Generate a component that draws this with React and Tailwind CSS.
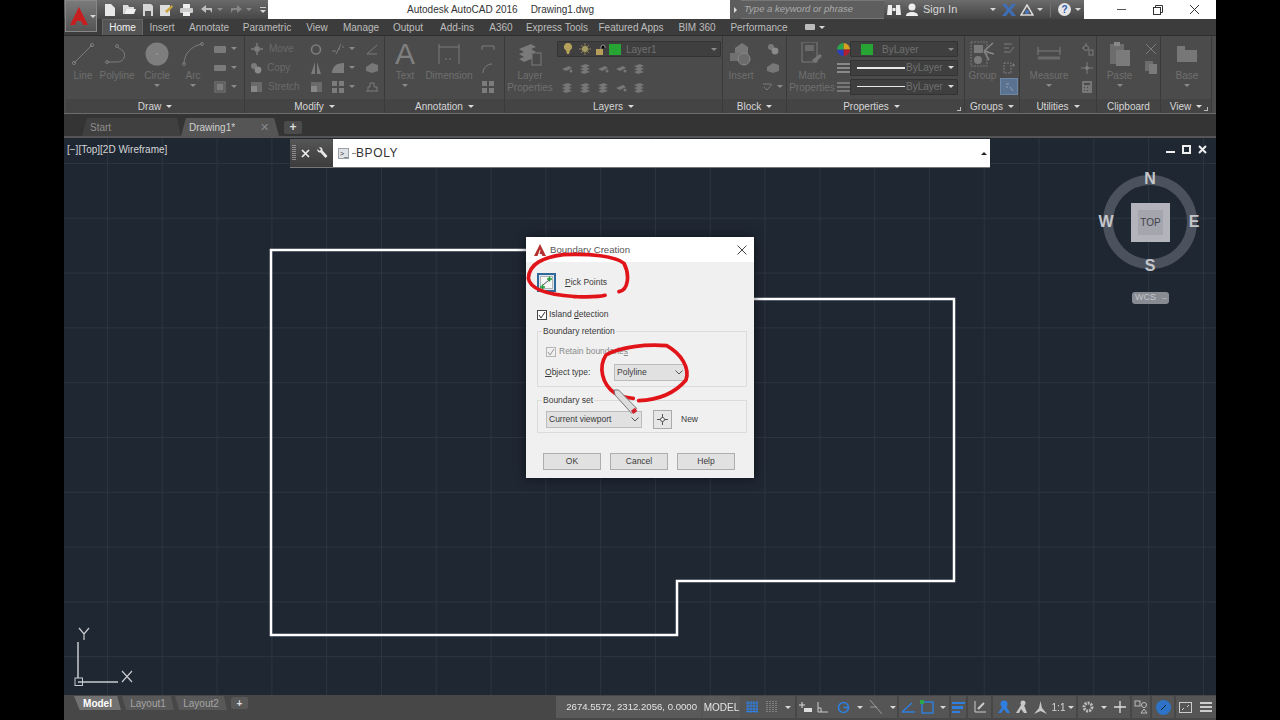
import React from 'react';

// tiny svg wrapper, everything in the ribbon is drawn on a small box
const Ic = ({ w = 14, h = 14, className = 'text-[#7c7c7c]', children }) => (
  <svg width={w} height={h} viewBox={`0 0 ${w} ${h}`} fill="none" stroke="currentColor" strokeWidth="1" className={`flex-shrink-0 ${className}`}>
    {children}
  </svg>
);

const Caret = ({ up = false, color = 'light' }) => (
  <span className={`inline-block w-0 h-0 border-x-[3px] border-x-transparent flex-shrink-0
    ${up ? 'border-b-[3px]' : 'border-t-[3px]'}
    ${color === 'light' && !up ? 'border-t-[#d8d8d8]' : ''}
    ${color === 'dim' ? 'border-t-[#8a8a8a]' : ''}
    ${up ? 'border-b-[#222]' : ''}`} />
);

const tabs = [
  ['Home', 'w-[41px]'], ['Insert', 'w-[38px]'], ['Annotate', 'w-[56px]'], ['Parametric', 'w-[60px]'],
  ['View', 'w-[40px]'], ['Manage', 'w-[48px]'], ['Output', 'w-[46px]'], ['Add-ins', 'w-[52px]'],
  ['A360', 'w-[36px]'], ['Express Tools', 'w-[76px]'], ['Featured Apps', 'w-[72px]'], ['BIM 360', 'w-[60px]'],
  ['Performance', 'w-[64px]'],
];

const Big = ({ w, label, label2, caret, children }) => (
  <div className={`${w} flex flex-col items-center pt-[6px] flex-shrink-0`}>
    <div className="h-[24px] flex items-center justify-center">{children}</div>
    <span className="mt-[4px] text-[10px] leading-[12px] text-[#6f6f6f] whitespace-nowrap">{label}</span>
    {label2 && <span className="text-[10px] leading-[12px] text-[#6f6f6f] whitespace-nowrap">{label2}</span>}
    {caret && <span className="mt-[2px] flex"><Caret color="dim" /></span>}
  </div>
);

const SmallCol = ({ w, children }) => (
  <div className={`${w} flex flex-col pt-[3px] flex-shrink-0`}>{children}</div>
);

const SmallRow = ({ caret, children }) => (
  <div className="h-[19px] flex items-center justify-center gap-[4px]">
    {children}
    {caret && <Caret color="dim" />}
  </div>
);

const Panel = ({ w, title, caret = true, corner, titleClass = '', children }) => (
  <div className={`${w} flex-shrink-0 flex flex-col border-r border-r-[#3a3a3a]`}>
    <div className="h-[63px] flex overflow-hidden">{children}</div>
    <div className={`h-[14px] bg-[#444] flex items-center justify-center gap-[5px] relative text-[10px] text-[#d6d6d6] ${titleClass}`}>
      <span>{title}</span>
      {caret && <Caret />}
      {corner && <span className="absolute right-[3px] bottom-[2px] w-[4px] h-[4px] border-r border-b border-[#bbb]" />}
    </div>
  </div>
);

// ---- small ribbon glyphs
const LineIc = () => <Ic w={24} h={24}><path d="M3 21 21 3" /><circle cx="3" cy="21" r="1.6" /><circle cx="21" cy="3" r="1.6" /></Ic>;
const PolyIc = () => <Ic w={26} h={24}><path d="M3 20h10c8 0 9-8 6-11-2-2-4-3-6-4" /><circle cx="3" cy="20" r="1.5" /><circle cx="13" cy="4" r="1.5" /></Ic>;
const CircleIc = () => <svg width="24" height="24" viewBox="0 0 24 24"><circle cx="12" cy="12" r="11.5" fill="#7e7e7e" /><circle cx="12" cy="12" r="1" fill="#999" /></svg>;
const ArcIc = () => <Ic w={24} h={24}><path d="M3 22C3 12 10 4 21 2" /><circle cx="3" cy="22" r="1.5" /><circle cx="21" cy="2" r="1.5" /></Ic>;
const Blob = ({ w = 12, h = 10 }) => <svg width={w} height={h} viewBox={`0 0 ${w} ${h}`}><rect x="1" y="2" width={w - 2} height={h - 3} rx="1" fill="#7a7a7a" /></svg>;
const Dots = () => <svg width="12" height="12" viewBox="0 0 12 12"><circle cx="4" cy="4" r="3" fill="#7a7a7a" /><circle cx="8" cy="8" r="3.4" fill="#8a8a8a" /></svg>;
const MoveIc = () => <Ic w={14} h={14}><path d="M7 1v12M1 7h12" strokeWidth="1.4" /><rect x="5" y="5" width="4" height="4" fill="#7c7c7c" /></Ic>;
const RotIc = () => <Ic w={12} h={12}><circle cx="6" cy="6.5" r="4.5" strokeWidth="1.6" /></Ic>;
const TrimIc = () => <Ic w={14} h={12}><path d="M1 8h4M7 6h2M11 4h2" /><path d="M10 1 5 11" /></Ic>;
const EdgeIc = () => <Ic w={14} h={14}><path d="M2 12 12 3M2 12h10" /></Ic>;
const MirIc = () => <svg width="12" height="14" viewBox="0 0 12 14"><path d="M5 1v12H1zM7 1v12h4z" fill="#7c7c7c" /></svg>;
const FilIc = () => <svg width="14" height="12" viewBox="0 0 14 12"><path d="M1 11C1 5 5 1 13 1v10z" fill="#7c7c7c" /></svg>;
const CubeIc = () => <svg width="14" height="12" viewBox="0 0 14 12"><path d="M1 5l6-4 6 2v6l-6 2-6-2z" fill="#777" /></svg>;
const ScaleIc = () => <svg width="13" height="12" viewBox="0 0 13 12"><rect x="1" y="1" width="11" height="10" fill="#6a6a6a" /><rect x="1" y="5" width="6" height="6" fill="#888" /></svg>;
const GridIc = () => <svg width="13" height="12" viewBox="0 0 13 12"><path d="M0 0h5v5H0zM7 0h5v5H7zM0 7h5v5H0zM7 7h5v5H7z" fill="#7c7c7c" /></svg>;
const WaveIc = () => <Ic w={14} h={12}><path d="M1 10h12M3 10V6h2V2h4v4h3v4" /></Ic>;
const ARowIc = () => <Ic w={14} h={12}><path d="M1 3h12M1 3v4M13 3v4" /></Ic>;
const LyrSm = () => <svg width="13" height="12" viewBox="0 0 13 12"><path d="M1 3l6-2 4 2-6 2zM1 6l6-2 4 2-6 2zM1 9l6-2 4 2-6 2z" fill="#777" /></svg>;
const LyrFlat = () => <svg width="13" height="10" viewBox="0 0 13 10"><path d="M1 5l7-3 3 2-6 3z" fill="#777" /><circle cx="10" cy="7" r="1.5" fill="#777" /></svg>;

const Combo = ({ w, children }) => (
  <div className={`${w} h-[16px] bg-[#3f3f3f] border border-[#333] rounded-[1px] flex items-center text-[10px] text-[#6f6f6f] flex-shrink-0`}>
    {children}
  </div>
);

const Ribbon = () => (
  <div className="h-[78px] bg-[#4b4b4b] flex pl-[2px] border-b border-b-[#6c6c6c]">
    <Panel w="w-[179px]" title="Draw">
      <Big w="w-[34px]" label="Line"><LineIc /></Big>
      <Big w="w-[34px]" label="Polyline"><PolyIc /></Big>
      <Big w="w-[46px]" label="Circle" caret><CircleIc /></Big>
      <Big w="w-[26px]" label="Arc" caret><ArcIc /></Big>
      <SmallCol w="w-[38px]">
        <SmallRow caret><Blob w={14} h={10} /></SmallRow>
        <SmallRow caret><Blob w={14} h={9} /></SmallRow>
        <SmallRow caret><Ic w={14} h={14}><rect x="2" y="2" width="10" height="10" /><rect x="4" y="4" width="6" height="6" fill="#7c7c7c" /></Ic></SmallRow>
      </SmallCol>
    </Panel>
    <Panel w="w-[140px]" title="Modify">
      <SmallCol w="w-[60px]">
        {[['Move', <MoveIc key="m" />], ['Copy', <Dots key="c" />], ['Stretch', <ScaleIc key="s" />]].map(([t, ic]) => (
          <div key={t} className="h-[19px] flex items-center gap-[5px] pl-[5px] text-[10px] text-[#6a6a6a]">{ic}<span>{t}</span></div>
        ))}
      </SmallCol>
      <SmallCol w="w-[22px]">
        <SmallRow><RotIc /></SmallRow>
        <SmallRow><MirIc /></SmallRow>
        <SmallRow><ScaleIc /></SmallRow>
      </SmallCol>
      <SmallCol w="w-[32px]">
        <SmallRow caret><TrimIc /></SmallRow>
        <SmallRow caret><FilIc /></SmallRow>
        <SmallRow caret><GridIc /></SmallRow>
      </SmallCol>
      <SmallCol w="w-[26px]">
        <SmallRow><EdgeIc /></SmallRow>
        <SmallRow><CubeIc /></SmallRow>
        <SmallRow><WaveIc /></SmallRow>
      </SmallCol>
    </Panel>
    <Panel w="w-[120px]" title="Annotation">
      <Big w="w-[40px]" label="Text" caret><span className="text-[30px] leading-[24px] text-[#7f7f7f]">A</span></Big>
      <Big w="w-[48px]" label="Dimension">
        <Ic w={24} h={24}><path d="M2 2v20M22 2v20M2 5h20" /><path d="M8 17h8" strokeDasharray="2 2" /></Ic>
      </Big>
      <SmallCol w="w-[30px]">
        <SmallRow><ARowIc /></SmallRow>
        <SmallRow><Ic w={14} h={12}><path d="M2 11C2 6 6 2 11 2" /></Ic></SmallRow>
        <SmallRow><GridIc /></SmallRow>
      </SmallCol>
    </Panel>
    <Panel w="w-[218px]" title="Layers">
      <Big w="w-[50px]" label="Layer" label2="Properties">
        <svg width="26" height="24" viewBox="0 0 26 24"><path d="M2 7l12-5 5 3-12 5zM2 12l12-5 5 3-12 5zM2 17l12-5 5 3-12 5z" fill="#7a7a7a" /><rect x="15" y="11" width="9" height="12" fill="#4a4a4a" stroke="#7a7a7a" /></svg>
      </Big>
      <div className="flex flex-col pt-[5px] ml-[2px]">
        <Combo w="w-[164px]">
          <svg width="10" height="12" viewBox="0 0 10 12" className="ml-[5px]"><path d="M5 0a4 4 0 0 1 2 7.5L6 11H4L3 7.5A4 4 0 0 1 5 0z" fill="#b5a25a" /></svg>
          <svg width="12" height="12" viewBox="0 0 12 12" className="ml-[6px]"><circle cx="6" cy="6" r="3" fill="#a39a5e" /><path d="M6 0v12M0 6h12M2 2l8 8M10 2l-8 8" stroke="#a39a5e" strokeWidth=".7" /></svg>
          <svg width="11" height="11" viewBox="0 0 11 11" className="ml-[5px]"><rect x="0" y="5" width="7" height="6" fill="#b79c5c" /><path d="M5 5V3a2 2 0 0 1 4 0v1" stroke="#999" /></svg>
          <span className="ml-[2px] w-[12px] h-[11px] bg-[#27a534] flex-shrink-0" />
          <span className="ml-[5px]">Layer1</span>
          <span className="ml-auto mr-[3px] flex"><Caret color="dim" /></span>
        </Combo>
        <div className="mt-[2px] flex flex-col">
          {[0, 1].map(r => (
            <div key={r} className="h-[19px] flex items-center gap-[5px] pl-[4px]">
              {r === 0
                ? [<LyrFlat key="a" />, <LyrSm key="b" />, <LyrFlat key="c" />, <LyrFlat key="d" />, <LyrSm key="e" />]
                : [<LyrSm key="a" />, <LyrSm key="b" />, <LyrSm key="c" />, <LyrFlat key="d" />, <LyrSm key="e" />]}
            </div>
          ))}
        </div>
      </div>
    </Panel>
    <Panel w="w-[64px]" title="Block">
      <Big w="w-[36px]" label="Insert">
        <svg width="24" height="24" viewBox="0 0 24 24"><path d="M6 6l7-5 6 4v8H6z" fill="#777" /><rect x="1" y="11" width="14" height="8" fill="#707070" /><circle cx="15" cy="17" r="6" fill="#6c6c6c" stroke="#888" /></svg>
      </Big>
      <SmallCol w="w-[27px]">
        <SmallRow><Dots /></SmallRow>
        <SmallRow><CubeIc /></SmallRow>
        <SmallRow caret><Ic w={11} h={11}><path d="M1 3h8M2 6l3 3 5-6" /></Ic></SmallRow>
      </SmallCol>
    </Panel>
    <Panel w="w-[178px]" title="Properties" corner titleClass="pr-[8px]">
      <Big w="w-[50px]" label="Match" label2="Properties">
        <svg width="24" height="24" viewBox="0 0 24 24"><rect x="2" y="0" width="15" height="20" fill="none" stroke="#7a7a7a" /><rect x="5" y="3" width="9" height="6" fill="#6a6a6a" /><path d="M12 18l8-6 2 2-7 7z" fill="#777" /></svg>
      </Big>
      <div className="flex flex-col pt-[4px]">
        <div className="flex items-center h-[18px]">
          <svg width="13" height="13" viewBox="0 0 13 13"><path d="M6.500 0A6.500 6.500 0 0 1 13 6.500H6.500z" fill="#d8a21f" /><path d="M13 6.500A6.500 6.500 0 0 1 6.500 13V6.500z" fill="#b01f2f" /><path d="M6.500 13A6.500 6.500 0 0 1 0 6.500h6.500z" fill="#2a3fc0" /><path d="M0 6.500A6.500 6.500 0 0 1 6.500 0v6.500z" fill="#2ca548" /></svg>
          <Combo w="w-[108px]">
            <span className="ml-[10px] w-[12px] h-[11px] bg-[#27a534] flex-shrink-0" />
            <span className="ml-[9px]">ByLayer</span>
            <span className="ml-auto mr-[3px] flex"><Caret color="dim" /></span>
          </Combo>
        </div>
        {['h-[2px]', 'h-px'].map((lh, i) => (
          <div key={lh} className="flex items-center h-[19px]">
            <span className={`w-[13px] flex flex-col ${i === 0 ? 'gap-[2px]' : 'gap-[2px] opacity-70'}`}>
              <span className="h-[2px] bg-[#8a8a8a]" /><span className="h-[2px] bg-[#8a8a8a]" /><span className="h-[2px] bg-[#8a8a8a]" />
            </span>
            <Combo w="w-[108px]">
              <span className={`ml-[6px] w-[48px] ${lh} bg-[#e8e8e8] flex-shrink-0`} />
              <span className="ml-[1px]">ByLayer</span>
              <span className="ml-auto mr-[3px] flex"><Caret /></span>
            </Combo>
          </div>
        ))}
      </div>
    </Panel>
    <Panel w="w-[55px]" title="Groups">
      <Big w="w-[35px]" label="Group">
        <svg width="26" height="26" viewBox="0 0 26 26"><rect x="1" y="1" width="16" height="24" fill="none" stroke="#777" strokeDasharray="2 1" /><rect x="4" y="4" width="9" height="8" fill="#7a7a7a" /><circle cx="8" cy="19" r="4" fill="#7a7a7a" /><path d="M14 10l9-8M14 10l10 3M14 10l5 9" stroke="#888" strokeWidth="1.5" /></svg>
      </Big>
      <SmallCol w="w-[18px]">
        <SmallRow><Ic w={12} h={13}><path d="M1 2h8M1 6h5M1 10h5M6 11l5-6" /></Ic></SmallRow>
        <SmallRow><Ic w={12} h={12}><rect x="1" y="1" width="7" height="10" strokeDasharray="2 1" /><path d="M9 3h3M10.500 1.500v3" /></Ic></SmallRow>
        <SmallRow><span className="w-[18px] h-[17px] bg-[#5b7390] border border-[#6d88a6] flex items-center justify-center"><Ic w={10} h={10} className="text-[#8fa0b4]"><path d="M2 2h3M2 5h2M6 5l3 4" /></Ic></span></SmallRow>
      </SmallCol>
    </Panel>
    <Panel w="w-[77px]" title="Utilities">
      <Big w="w-[58px]" label="Measure" caret>
        <Ic w={26} h={20}><path d="M2 3v8M24 3v8M2 7h22" /><path d="M2 14h22" strokeWidth="3" className="text-[#6a6a6a]" /></Ic>
      </Big>
      <SmallCol w="w-[18px]">
        <SmallRow><Ic w={13} h={14}><circle cx="5" cy="6" r="2.500" /><rect x="8" y="8" width="4" height="5" /><path d="M5 1v3M1 6h2" /></Ic></SmallRow>
        <SmallRow><Ic w={14} h={14}><path d="M7 1v12M1 7h12" /><circle cx="7" cy="7" r="1.500" fill="#7c7c7c" /></Ic></SmallRow>
        <SmallRow><svg width="10" height="12" viewBox="0 0 10 12"><rect width="10" height="12" rx="1" fill="#777" /><rect x="2" y="2" width="6" height="2" fill="#4a4a4a" /><path d="M2 6h1v1H2zM5 6h1v1H5zM2 9h1v1H2zM5 9h1v1H5z" fill="#4a4a4a" /></svg></SmallRow>
      </SmallCol>
    </Panel>
    <Panel w="w-[64px]" title="Clipboard" caret={false}>
      <Big w="w-[45px]" label="Paste" caret>
        <svg width="20" height="24" viewBox="0 0 20 24"><rect x="0" y="2" width="14" height="20" fill="#6d6d6d" /><rect x="4" y="0" width="6" height="4" fill="#888" /><rect x="6" y="8" width="14" height="16" fill="#7b7b7b" /></svg>
      </Big>
      <SmallCol w="w-[18px]">
        <SmallRow><Ic w={12} h={12}><path d="M1 1l10 10M11 1 1 11" /></Ic></SmallRow>
        <SmallRow><svg width="12" height="13" viewBox="0 0 12 13"><rect x="0" y="0" width="8" height="10" fill="#6d6d6d" /><rect x="4" y="3" width="8" height="10" fill="#7b7b7b" /></svg></SmallRow>
      </SmallCol>
    </Panel>
    <Panel w="w-[51px]" title="View" corner>
      <div className="pl-[2px]">
        <Big w="w-[48px]" label="Base" caret>
          <svg width="20" height="16" viewBox="0 0 20 16"><path d="M0 0h8v4h12v12H0z" fill="#777" /></svg>
        </Big>
      </div>
    </Panel>
  </div>
);

const TitleBar = () => (
  <div className="h-[19px] flex bg-white">
    <div className="w-[204px] pl-[40px] flex items-center gap-[7px] bg-gradient-to-b from-[#6a6a6a] to-[#474747]">
      <svg width="12" height="12" viewBox="0 0 12 12"><path d="M1 0h6l4 4v8H1z" fill="#e8e8e8" /></svg>
      <svg width="13" height="11" viewBox="0 0 13 11"><path d="M0 1h5l1 2h5v2H3L1 10H0z" fill="#ddd" /><path d="M3 5h10l-2 5H1z" fill="#f0f0f0" /></svg>
      <svg width="10" height="12" viewBox="0 0 10 12"><path d="M0 0h8l2 2v10H0z" fill="#d5d5d5" /><rect x="2" y="7" width="6" height="5" fill="#555" /></svg>
      <svg width="13" height="12" viewBox="0 0 13 12"><rect y="1" width="10" height="11" fill="#ddd" /><path d="M5 7l7-6 1 2-6 6z" fill="#c8a43a" /></svg>
      <svg width="13" height="12" viewBox="0 0 13 12"><rect x="3" y="0" width="7" height="4" fill="#eee" /><rect y="4" width="13" height="5" rx="1" fill="#ccc" /><rect x="3" y="8" width="7" height="4" fill="#eee" /></svg>
      <span className="flex items-center gap-[4px] ml-[1px]">
        <svg width="12" height="10" viewBox="0 0 12 10"><path d="M5 0 0 4l5 4V5h4l2 3V3H5z" fill="#bdbdbd" /></svg>
        <Caret color="dim" />
      </span>
      <span className="flex items-center gap-[4px]">
        <svg width="12" height="10" viewBox="0 0 12 10"><path d="M7 0l5 4-5 4V5H3L1 8V3h6z" fill="#858585" /></svg>
        <Caret color="dim" />
      </span>
      <span className="w-[7px] flex flex-col gap-[2px] items-center">
        <span className="w-[6px] h-px bg-[#ccc]" /><Caret />
      </span>
    </div>
    <div className="w-[462px] pl-[139px] flex items-center text-[10px] text-[#333] whitespace-nowrap">
      <span>Autodesk AutoCAD 2016</span><span className="ml-[13px]">Drawing1.dwg</span>
    </div>
    <div className="w-[11px] bg-[#5d5d5d] flex items-center justify-center">
      <span className="w-0 h-0 border-y-[3px] border-y-transparent border-l-[3px] border-l-[#ddd]" />
    </div>
    <div className="w-[143px] bg-[#5e5e5e] flex items-center pl-[3px] text-[9.5px] italic text-[#aaa] border-y border-[#777]">Type a keyword or phrase</div>
    <div className="w-[200px] flex-shrink-0 bg-gradient-to-b from-[#6c6c6c] to-[#444] flex items-center pl-[3px] text-[10px] text-[#d8d8d8] whitespace-nowrap">
      <svg width="14" height="12" viewBox="0 0 14 12" className="flex-shrink-0"><path d="M1 1h4v10H0zM9 1h4l1 10H9zM5.500 4h3v3h-3z" fill="#eee" /></svg>
      <svg width="14" height="14" viewBox="0 0 14 14" className="ml-[4px] flex-shrink-0"><circle cx="7" cy="4" r="3.500" fill="#eee" /><path d="M1 13c0-3 3-4 6-4s6 1 6 4z" fill="#eee" /></svg>
      <span className="ml-[4px] w-[33px] text-[11px]">Sign In</span>
      <span className="ml-[34px] flex"><Caret /></span>
      <svg width="14" height="12" viewBox="0 0 14 12" className="ml-[6px] flex-shrink-0"><path d="M0 0h4l3 4 3-4h4L9 6l5 6h-4L7 8l-3 4H0l5-6z" fill="#3f6fb8" /></svg>
      <svg width="14" height="12" viewBox="0 0 14 12" className="ml-[4px] flex-shrink-0"><path d="M7 1l6 10H1z" fill="none" stroke="#d8d8d8" strokeWidth="1.500" /><circle cx="7" cy="8" r="2" fill="#4878c0" /></svg>
      <span className="ml-[3px] flex"><Caret /></span>
      <span className="ml-[7px] w-px h-[14px] bg-[#6f6f6f]" />
      <span className="ml-[7px] w-[13px] h-[13px] flex-shrink-0 rounded-full bg-[#e6e6e6] flex items-center justify-center text-[10px] font-bold text-[#2b5aa6]">?</span>
      <span className="ml-[4px] flex"><Caret /></span>
    </div>
    <div className="flex-1 flex items-center text-[#444]">
      <span className="ml-[33px] w-[9px] h-px bg-[#555]" />
      <svg width="10" height="10" viewBox="0 0 10 10" className="ml-[27px]" fill="none" stroke="#333"><rect x=".500" y="2.500" width="7" height="7" /><path d="M2.500 2.500v-2h7v7h-2" /></svg>
      <svg width="11" height="11" viewBox="0 0 11 11" className="ml-[26px]" stroke="#333"><path d="M1 1l9 9M10 1l-9 9" /></svg>
    </div>
  </div>
);

const TabStrip = () => (
  <div className="h-[17px] bg-[#3c3c3c] flex pl-[38px] text-[10px] text-[#bdbdbd] border-b border-b-[#2e2e2e]">
    {tabs.map(([t, w], i) => (
      <div key={t} className={`${w} flex items-center justify-center ${i === 0 ? 'bg-[#555] text-[#f0f0f0] border-x border-t border-[#666]' : ''}`}>{t}</div>
    ))}
    <div className="ml-[14px] flex items-center gap-[4px]">
      <span className="w-[10px] h-[6px] bg-[#bbb] rounded-[1px]" /><Caret />
    </div>
  </div>
);

const FileTabs = () => (
  <div className="h-[24px] bg-[#343434] flex pl-[18px] items-end border-b-[2px] border-b-[#555] text-[10px]">
    <div className="w-[99px] h-[18px] bg-[#404040] text-[#8e8e8e] flex items-center pl-[8px] [clip-path:polygon(5%_0,96%_0,100%_100%,0_100%)]">Start</div>
    <div className="w-[98px] h-[18px] bg-[#555] text-[#d0d0d0] flex items-center pl-[8px] justify-between pr-[10px] [clip-path:polygon(5%_0,95%_0,100%_100%,0_100%)]">
      <span>Drawing1*</span><span className="text-[#888] text-[11px]">✕</span>
    </div>
    <div className="ml-[5px] mb-[2px] w-[18px] h-[13px] bg-[#4b4b4b] rounded-[2px] text-[#ddd] text-[12px] leading-[13px] text-center font-bold">+</div>
  </div>
);

const Dialog = () => (
  <div className="absolute left-[462px] top-[99px] w-[228px] h-[241px] bg-[#f0f0f0] shadow-[0_0_10px_rgba(0,0,0,0.55)] text-[8.5px] leading-[13px] text-[#3a3a3a]">
    <div className="h-[25px] bg-white flex items-center pl-[8px] pr-[7px] text-[9.6px] text-[#555]">
      <svg width="12" height="12" viewBox="0 0 12 12"><path d="M6 0 12 12H8.500L7.500 10H5.500L6.500 6.500 6 5.500 3.500 12H0z" fill="#b52f2f" /></svg>
      <span className="ml-[4px]">Boundary Creation</span>
      <svg width="10" height="10" viewBox="0 0 10 10" className="ml-auto" stroke="#444"><path d="M.5.5l9 9M9.500.5l-9 9" /></svg>
    </div>
    <div className="pl-[11px] pr-[7px]">
      <div className="mt-[11px] flex items-center">
        <svg width="19" height="19" viewBox="0 0 19 19"><rect x="1" y="1" width="17" height="17" fill="#dfe7ee" stroke="#2f6a9a" strokeWidth="2" /><rect x="3.500" y="3.500" width="12" height="12" fill="#f7f7f7" stroke="#777" strokeDasharray="1 1" /><path d="M6 12 12 7" stroke="#555" /><path d="M10 6h5M12.500 3.500v5M3 14h5M5.500 11.500v5" stroke="#1f9a3a" strokeWidth="1.500" /></svg>
        <span className="ml-[9px]"><u>P</u>ick Points</span>
      </div>
      <div className="mt-[16px] flex items-center gap-[2px]">
        <span className="w-[10px] h-[10px] bg-white border border-[#444] flex items-center justify-center">
          <svg width="8" height="8" viewBox="0 0 8 8" fill="none" stroke="#333"><path d="M1 4l2 3 4-6" /></svg>
        </span>
        <span>Island <u>d</u>etection</span>
      </div>
      <div className="relative mt-[10px] h-[56px] w-[210px] border border-[#dcdcdc] px-[7px] pt-[13px]">
        <span className="absolute left-[4px] -top-[6px] bg-[#f0f0f0] px-px leading-[11px]">Boundary retention</span>
        <div className="flex items-center gap-[3px] text-[#8a8a8a] ml-[1px]">
          <span className="w-[10px] h-[10px] border border-[#b5b5b5] flex items-center justify-center">
            <svg width="8" height="8" viewBox="0 0 8 8" fill="none" stroke="#999"><path d="M1 4l2 3 4-6" /></svg>
          </span>
          <span>Retain boundarie<u>s</u></span>
        </div>
        <div className="mt-[6px] flex items-center">
          <span className="w-[69px]"><u>O</u>bject type:</span>
          <div className="w-[72px] h-[17px] bg-[#e1e1e1] border border-[#bcbcbc] flex items-center pl-[2px]">
            <span>Polyline</span>
            <svg width="8" height="5" viewBox="0 0 8 5" fill="none" stroke="#555" className="ml-auto mr-[2px]"><path d="M.5.5 4 4 7.500.5" /></svg>
          </div>
        </div>
      </div>
      <div className="relative mt-[13px] h-[33px] w-[210px] border border-[#dcdcdc] pl-[8px] pt-[5px] flex items-center">
        <span className="absolute left-[4px] -top-[6px] bg-[#f0f0f0] px-px leading-[11px]">Boundary set</span>
        <div className="w-[96px] h-[17px] bg-[#e1e1e1] border border-[#bcbcbc] flex items-center pl-[2px]">
          <span>Current viewport</span>
          <svg width="8" height="5" viewBox="0 0 8 5" fill="none" stroke="#555" className="ml-auto mr-[2px]"><path d="M.5.5 4 4 7.500.5" /></svg>
        </div>
        <div className="ml-[11px] w-[19px] h-[19px] bg-[#e6e6e6] border border-[#aaa] flex items-center justify-center">
          <svg width="11" height="11" viewBox="0 0 11 11" fill="none" stroke="#555"><path d="M5.500 0v11M0 5.500h11" /><circle cx="5.500" cy="5.500" r="2" fill="#eee" /></svg>
        </div>
        <span className="ml-[9px]">New</span>
      </div>
      <div className="mt-[20px] ml-[6px] flex gap-[9px]">
        {['OK', 'Cancel', 'Help'].map(b => (
          <div key={b} className="w-[58px] h-[17px] bg-[#e1e1e1] border border-[#adadad] flex items-center justify-center">{b}</div>
        ))}
      </div>
    </div>
    {/* red marker scribbles + pen, coordinates taken off a 3x crop */}
    <svg width="240" height="255" viewBox="0 0 720 765" className="absolute -left-[6px] -top-[7px] pointer-events-none" fill="none">
      <path d="M297 185C325 180 330 135 312 100 285 78 210 70 130 74 70 82 28 100 25 145 30 178 80 195 170 200 200 201 240 200 255 196" stroke="#e1141a" strokeWidth="11" strokeLinecap="round" />
      <path d="M356 512C410 510 460 495 498 450 510 415 485 372 440 347 380 342 300 350 258 375 235 410 245 462 285 490 305 503 325 503 340 505" stroke="#e1141a" strokeWidth="11" strokeLinecap="round" />
      <path d="M282 480 296 480 350 535 335 550 285 495Z" fill="#dcdcdc" stroke="#777" strokeWidth="3" />
      <path d="M333 542 345 533 352 543 340 552Z" fill="#d2202a" />
    </svg>
  </div>
);

const ViewCube = () => (
  <div className="absolute left-[1017px] top-[26px] w-[138px] h-[144px] pointer-events-none">
    <svg width="138" height="144" viewBox="0 0 138 144" className="absolute inset-0">
      <circle cx="69" cy="58" r="42" fill="none" stroke="#4b525e" strokeWidth="10" />
    </svg>
    <span className="absolute left-[59px] top-[7px] w-[20px] text-center text-[16px] leading-[16px] font-bold text-[#c4c6ca]">N</span>
    <span className="absolute left-[59px] top-[94px] w-[20px] text-center text-[16px] leading-[16px] font-bold text-[#c4c6ca]">S</span>
    <span className="absolute left-[103px] top-[50px] w-[20px] text-center text-[16px] leading-[16px] font-bold text-[#c4c6ca]">E</span>
    <span className="absolute left-[15px] top-[50px] w-[20px] text-center text-[16px] leading-[16px] font-bold text-[#c4c6ca]">W</span>
    <div className="absolute left-[50px] top-[39px] w-[39px] h-[39px] bg-[#b3b4bb] flex items-center justify-center">
      <div className="w-[25px] h-[25px] bg-[#a5a6ad] flex items-center justify-center text-[10px] text-[#3f4149]">TOP</div>
    </div>
    <div className="absolute left-[51px] top-[128px] w-[37px] h-[12px] rounded-[3px] bg-[#888b92] flex items-center pl-[3px] text-[9px] text-[#c3c5ca]">
      WCS<span className="ml-auto mr-[2px] w-[5px] h-px bg-[#aaa]" />
    </div>
  </div>
);

const Viewport = () => (
  <div className="relative flex-1 overflow-hidden bg-[#1f2733] bg-[linear-gradient(to_right,#2c3440_1px,transparent_1px),linear-gradient(to_bottom,#2c3440_1px,transparent_1px)] bg-[size:54.8px_54.8px] bg-[position:43px_25px]">
    <span className="absolute left-[3px] top-[6px] text-[10px] leading-[12px] text-[#d5d5d5]">[−][Top][2D Wireframe]</span>

    <svg width="1152" height="557" viewBox="0 0 1152 557" className="absolute inset-0" fill="none">
      <path d="M207 112H586V161H890V443H613V497H207Z" stroke="#fff" strokeWidth="2.500" />
      {/* UCS icon */}
      <path d="M14 504V540M14 544H54" stroke="#c8ccd0" strokeWidth="1.500" />
      <rect x="11" y="540" width="7.500" height="7.500" stroke="#c8ccd0" />
      <path d="M58 533l10 11M68 533l-10 11M15 490l5 6 5-6M20 496v6" stroke="#c8ccd0" strokeWidth="1.200" />
    </svg>

    {/* command line */}
    <div className="absolute left-[226px] top-[1px] w-[700px] h-[28px] flex shadow-[0_1px_0_#777]">
      <div className="w-[43px] bg-gradient-to-b from-[#565656] to-[#3c3c3c] flex items-center pl-[2px]">
        <span className="w-[4px] h-[16px] opacity-70 bg-[repeating-linear-gradient(to_bottom,#aaa_0,#aaa_1px,transparent_1px,transparent_2px)]" />
        <svg width="9" height="9" viewBox="0 0 9 9" stroke="#eee" strokeWidth="1.700" className="ml-[5px]"><path d="M1 1l7 7M8 1 1 8" /></svg>
        <svg width="12" height="12" viewBox="0 0 12 12" className="ml-[6px]" fill="#e8e8e8"><path d="M1.500 2 3.500 4 5 2.500 3 .5C5-.3 6.800 1 6.500 3.500L11.500 9 9.500 11 4.500 5.500C2.500 6 .8 4.300 1.500 2Z" /></svg>
      </div>
      <div className="flex-1 bg-white flex items-center pl-[5px] pr-[3px]">
        <span className="w-[11px] h-[11px] bg-[#dfe3e8] border border-[#9aa0a8] flex items-center text-[7px] leading-none text-[#333] pl-px">&gt;_</span>
        <span className="ml-[3px] w-[4px] h-px bg-[#888]" />
        <span className="text-[12px] tracking-[0.6px] text-[#333]">BPOLY</span>
        <span className="ml-auto flex"><Caret up /></span>
      </div>
    </div>

    {/* viewport window buttons */}
    <div className="absolute left-[1102px] top-[7px] flex items-center gap-[7px]">
      <span className="w-[9px] h-[2px] mt-[4px] bg-[#eee]" />
      <span className="w-[9px] h-[9px] border-2 border-[#eee]" />
      <svg width="9" height="9" viewBox="0 0 9 9" stroke="#eee" strokeWidth="2"><path d="M1 1l7 7M8 1 1 8" /></svg>
    </div>

    <ViewCube />
    <Dialog />
  </div>
);

const B = '#2f7fe0';
const statusCells = [
  ['w-[20px]', <svg key="g" width="12" height="12" viewBox="0 0 12 12" stroke={B}><path d="M2 0v12M5 0v12M8 0v12M11 0v12M0 2h12M0 5h12M0 8h12M0 10.500h12" /></svg>],
  ['w-[19px]', <svg key="d" width="12" height="12" viewBox="0 0 12 12" stroke="#aaa" strokeDasharray="1 1"><path d="M1 0v12M4 0v12M7 0v12M10 0v12" /></svg>],
  ['w-[14px]', <Caret key="c1" />],
  ['sep'],
  ['w-[17px]', <svg key="p" width="13" height="11" viewBox="0 0 13 11"><path d="M3 0v6M0 3h6" stroke="#ddd" /><rect x="5" y="6" width="8" height="4" fill="#ddd" /></svg>],
  ['w-[16px]', <svg key="o" width="11" height="11" viewBox="0 0 11 11" fill="none" stroke="#ccc"><path d="M1 0v10h10" /><path d="M1 6h3v4" /></svg>],
  ['w-[27px]', <svg key="po" width="13" height="13" viewBox="0 0 13 13" fill="none" stroke={B} strokeWidth="1.600"><circle cx="6.500" cy="6.500" r="5" /><path d="M6.500 6.500h5" /></svg>],
  ['w-[6px]', <Caret key="c2" />],
  ['w-[25px]', <svg key="x" width="14" height="16" viewBox="0 0 14 16" fill="none" stroke="#9a9a9a"><path d="M1 1l12 14M1 8h7" /></svg>],
  ['w-[9px]', <Caret key="c3" />],
  ['sep'],
  ['w-[18px]', <svg key="iso" width="13" height="11" viewBox="0 0 13 11" fill="none" stroke={B} strokeWidth="1.400"><path d="M0 10h13M0 10 10 1" /></svg>],
  ['w-[20px]', <svg key="sn" width="14" height="14" viewBox="0 0 14 14" fill="none"><rect x="2" y="2" width="11" height="11" stroke={B} strokeWidth="1.400" /><rect x="0" y="0" width="4" height="4" fill="#2fa54a" /></svg>],
  ['w-[12px]', <Caret key="c4" />],
  ['sep'],
  ['w-[15px]', <span key="lw" className="flex flex-col gap-[2px] w-[13px]"><span className="h-[2px] bg-[#2f7fe0]" /><span className="h-[3px] bg-[#2f7fe0] w-[11px]" /><span className="h-[2px] bg-[#2f7fe0] w-[8px]" /></span>],
  ['sep'],
  ['w-[23px]', <svg key="ad" width="14" height="14" viewBox="0 0 14 14" fill="none" stroke="#ccc"><path d="M2 1v11h11" /><path d="M5 9l6-6" strokeWidth="2" /></svg>],
  ['sep'],
  ['w-[19px]', <svg key="a1" width="14" height="14" viewBox="0 0 14 14" fill={B}><circle cx="8" cy="4" r="3.500" /><path d="M7 6 2 13h3l3-4 3 4h3L10 6z" /></svg>],
  ['w-[19px]', <svg key="a2" width="13" height="14" viewBox="0 0 13 14" fill="#c8c8c8"><circle cx="8" cy="3" r="2.500" /><path d="M6 5 1 13h3l2-4 3 4h3L9 5z" /></svg>],
  ['w-[19px]', <svg key="a3" width="13" height="13" viewBox="0 0 13 13" fill="#c8c8c8"><path d="M6.500 0 8 7l5 6-6.500-3L0 13l5-6z" /></svg>],
  ['w-[17px]', <span key="sc" className="text-[10px] text-[#d5d5d5]">1:1</span>],
  ['w-[8px]', <Caret key="c5" />],
  ['w-px', null],
  ['sep'],
  ['w-[20px]', <svg key="gr" width="12" height="12" viewBox="0 0 12 12"><circle cx="6" cy="6" r="4" fill="none" stroke="#bbb" strokeWidth="3" strokeDasharray="2 1" /></svg>],
  ['w-[12px]', <Caret key="c6" />],
  ['w-[20px]', <svg key="pl" width="12" height="12" viewBox="0 0 12 12" stroke="#ddd" strokeWidth="1.300"><path d="M6 0v12M0 6h12" /></svg>],
  ['sep'],
  ['w-[18px]', <svg key="hw" width="14" height="14" viewBox="0 0 14 14" fill="none" stroke="#bbb"><rect x="1" y="1" width="5" height="5" /><circle cx="10" cy="5" r="2.500" /><path d="M7 13l3-4 3 4z" /></svg>],
  ['sep'],
  ['w-[22px]', <span key="is" className="w-[15px] h-[15px] rounded-full bg-[#2d74c9] flex items-center justify-center"><svg width="7" height="7" viewBox="0 0 7 7" stroke="#123" fill="none"><path d="M1 6l5-5" /></svg></span>],
  ['sep'],
  ['w-[19px]', <svg key="fs" width="13" height="11" viewBox="0 0 13 11" fill="none" stroke="#ccc"><rect x=".5" y=".5" width="12" height="10" /><path d="M3 8l2-2M10 3 8 5" /></svg>],
  ['w-[21px]', <span key="m" className="flex flex-col gap-[2px] w-[12px]"><span className="h-[2px] bg-[#ccc]" /><span className="h-[2px] bg-[#ccc]" /><span className="h-[2px] bg-[#ccc]" /></span>],
];

const StatusBar = () => (
  <div className="h-[25px] bg-[#474747] flex items-start">
    <div className="flex flex-shrink-0 items-center w-[492px] pt-[1px] pl-[10px] text-[10px] text-[#a5a5a5]">
      <span className="w-[47px] h-[14px] bg-[#717171] text-white font-bold flex items-center justify-center [clip-path:polygon(0_0,92%_0,100%_100%,12%_100%)]">Model</span>
      <span className="w-[52px] ml-[1px] h-[14px] bg-[#585858] flex items-center justify-center [clip-path:polygon(0_0,94%_0,100%_100%,8%_100%)]">Layout1</span>
      <span className="w-[52px] ml-[1px] h-[14px] bg-[#585858] flex items-center justify-center [clip-path:polygon(0_0,94%_0,100%_100%,8%_100%)]">Layout2</span>
      <span className="w-[17px] ml-[4px] h-[12px] bg-[#585858] rounded-[2px] flex items-center justify-center font-bold text-[#ddd]">+</span>
    </div>
    <div className="flex-1 flex items-center h-[22px] mt-[1px] bg-[#555] overflow-hidden">
      <span className="w-[145px] flex-shrink-0 h-full bg-[#5a5a5a] flex items-center justify-end pr-[4px] text-[9.6px] text-[#e4e4e4] whitespace-nowrap">2674.5572, 2312.2056, 0.0000</span>
      <span className="ml-[2px] w-[37px] flex-shrink-0 h-full bg-[#5a5a5a] flex items-center justify-center text-[10px] text-[#e4e4e4]">MODEL</span>
      <span className="w-[2px] flex-shrink-0" />
      {statusCells.map(([w, el], i) => (
        w === 'sep'
          ? <span key={i} className="w-[2px] h-full bg-[#474747] flex-shrink-0" />
          : <span key={i} className={`${w} h-full flex items-center justify-center flex-shrink-0`}>{el}</span>
      ))}
    </div>
  </div>
);

export default function App() {
  return (
    <div className="w-[1280px] h-[720px] bg-black px-[64px] font-['Liberation_Sans',Arial,sans-serif] overflow-hidden">
      {/* the source is a soft video frame, so the whole window gets a hair of blur */}
      <div className="relative h-full flex flex-col blur-[0.35px]">
        <TitleBar />
        <TabStrip />
        <Ribbon />
        <FileTabs />
        <Viewport />
        <StatusBar />

        {/* application button hangs over the title bar and the tab row */}
        <div className="absolute left-[1px] top-0 w-[32px] h-[32px] bg-gradient-to-b from-[#7a7a7a] to-[#555] border border-[#888] flex items-center pl-[3px]">
          <svg width="20" height="20" viewBox="0 0 20 20"><path d="M10 1 19 19H14L12 15H8L9 12 10 10 6 19H1z" fill="#c71f1f" /></svg>
          <span className="flex ml-[1px]"><Caret /></span>
        </div>
      </div>
    </div>
  );
}
